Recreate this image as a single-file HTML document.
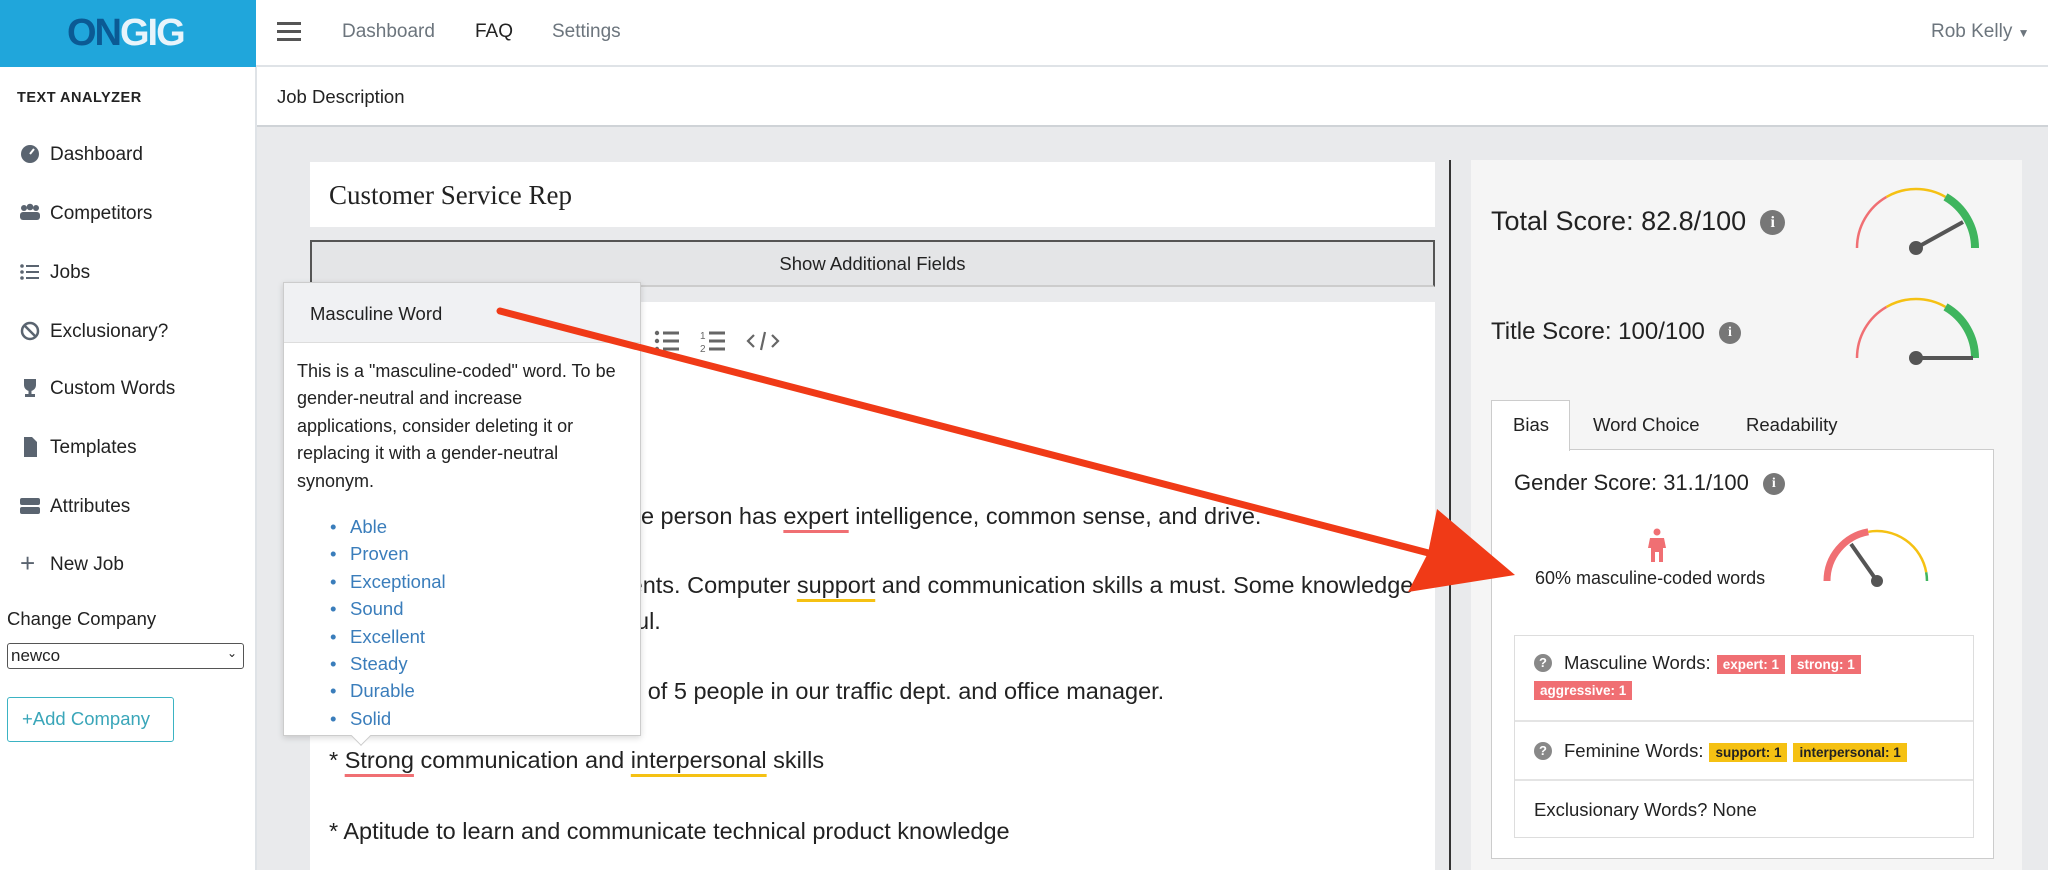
<!DOCTYPE html>
<html><head><meta charset="utf-8"><style>
*{margin:0;padding:0;box-sizing:border-box}
body{width:2048px;height:870px;overflow:hidden;font-family:"Liberation Sans",sans-serif;background:#fff;position:relative;color:#222}
.a{position:absolute;white-space:nowrap}
.side{font-size:19px;color:#222}
.ico{position:absolute;left:19px;width:22px;height:22px;color:#5a6470}
.ed{font-size:23.5px;color:#222}
.ul{text-decoration:underline;text-decoration-thickness:3px;text-underline-offset:6px}
.pl li{list-style:none;position:absolute;left:68px;font-size:18.5px;color:#3a7dbb}
.pl li:before{content:"•";position:absolute;left:-20px;color:#3a7dbb}
.badge{display:inline-block;font-size:13.5px;font-weight:bold;color:#fff;background:#f06f73;padding:2px 6px;margin-left:6px}
.by{background:#f5c113;color:#222}
.q{display:inline-block;width:18px;height:18px;border-radius:50%;background:#888;color:#fff;font-size:13px;text-align:center;line-height:18px;font-weight:bold;margin-right:12px;vertical-align:2px}
.info{display:inline-block;width:25px;height:25px;border-radius:50%;background:#777;color:#fff;font-size:16px;text-align:center;line-height:25px;font-weight:bold;font-family:"Liberation Serif",serif;margin-left:14px;vertical-align:3px}
</style></head><body>
<!-- header -->
<div class="a" style="left:0;top:0;width:256px;height:67px;background:#20a6db"></div>
<div class="a" style="left:67px;top:12px;font-size:38px;font-weight:bold;letter-spacing:-2px;color:#0b5a94">ON<span style="color:#e8f4fb">GIG</span></div>
<div class="a" style="left:256px;top:0;width:1792px;height:67px;background:#fff;border-bottom:2px solid #dfe3e7"></div>
<div class="a" style="left:277px;top:22px;width:24px;height:3px;background:#555;box-shadow:0 8px 0 #555,0 16px 0 #555"></div>
<div class="a" style="left:342px;top:21px;font-size:19px;color:#6c757d">Dashboard</div>
<div class="a" style="left:475px;top:21px;font-size:19px;color:#222">FAQ</div>
<div class="a" style="left:552px;top:21px;font-size:19px;color:#6c757d">Settings</div>
<div class="a" style="left:1931px;top:21px;font-size:19px;color:#6c757d">Rob Kelly <span style="font-size:12px">▼</span></div>
<!-- sidebar -->
<div class="a" style="left:255px;top:67px;width:2px;height:803px;background:#dfe3e7"></div>
<div class="a" style="left:17px;top:90px;font-size:14.5px;font-weight:bold;letter-spacing:.5px">TEXT ANALYZER</div>
<div class="a side" style="left:50px;top:144px">Dashboard</div>
<svg class="ico" style="top:143px" viewBox="0 0 22 22"><circle cx="11" cy="11" r="9" fill="#5a6470"/><path d="M11 11 L15 6" stroke="#fff" stroke-width="2"/></svg>
<div class="a side" style="left:50px;top:203px">Competitors</div>
<svg class="ico" style="top:202px" viewBox="0 0 22 22" fill="#5a6470"><circle cx="5" cy="6" r="3"/><circle cx="11" cy="5" r="3.3"/><circle cx="17" cy="6" r="3"/><rect x="1" y="10" width="20" height="8" rx="3"/></svg>
<div class="a side" style="left:50px;top:262px">Jobs</div>
<svg class="ico" style="top:261px" viewBox="0 0 22 22" fill="#5a6470"><circle cx="3" cy="5" r="1.8"/><circle cx="3" cy="11" r="1.8"/><circle cx="3" cy="17" r="1.8"/><rect x="7" y="4" width="13" height="2"/><rect x="7" y="10" width="13" height="2"/><rect x="7" y="16" width="13" height="2"/></svg>
<div class="a side" style="left:50px;top:321px">Exclusionary?</div>
<svg class="ico" style="top:320px" viewBox="0 0 22 22"><circle cx="11" cy="11" r="8" fill="none" stroke="#5a6470" stroke-width="2.5"/><path d="M5.5 5.5L16.5 16.5" stroke="#5a6470" stroke-width="2.5"/></svg>
<div class="a side" style="left:50px;top:378px">Custom Words</div>
<svg class="ico" style="top:377px" viewBox="0 0 22 22" fill="#5a6470"><path d="M5 2h12v6a6 6 0 0 1-12 0z"/><rect x="9.5" y="13" width="3" height="4"/><rect x="6" y="17" width="10" height="3"/></svg>
<div class="a side" style="left:50px;top:437px">Templates</div>
<svg class="ico" style="top:436px" viewBox="0 0 22 22" fill="#5a6470"><path d="M5 1h8l5 5v15H5z"/></svg>
<div class="a side" style="left:50px;top:496px">Attributes</div>
<svg class="ico" style="top:495px" viewBox="0 0 22 22" fill="#5a6470"><rect x="1" y="3" width="20" height="7" rx="2"/><rect x="1" y="12" width="20" height="7" rx="2"/></svg>
<div class="a side" style="left:50px;top:554px">New Job</div>
<div class="a" style="left:20px;top:548px;font-size:26px;color:#5a6470">+</div>
<div class="a" style="left:7px;top:608px;font-size:18.5px;color:#222">Change Company</div>
<div class="a" style="left:7px;top:643px;width:237px;height:26px;border:1px solid #555;border-radius:3px;font-size:17px;padding:2px 3px">newco<span style="position:absolute;right:6px;top:2px;font-size:12px">⌄</span></div>
<div class="a" style="left:7px;top:697px;width:167px;height:45px;border:1.5px solid #3bb3c3;border-radius:3px;color:#3aa6b9;font-size:18.5px;padding:10px 0 0 14px">+Add Company</div>
<!-- subheader -->
<div class="a" style="left:257px;top:67px;width:1791px;height:60px;background:#fff;border-bottom:2px solid #cfd3d7"></div>
<div class="a" style="left:277px;top:86px;font-size:18.5px">Job Description</div>
<div class="a" style="left:257px;top:127px;width:1791px;height:743px;background:#e9eaec"></div>
<!-- title -->
<div class="a" style="left:310px;top:162px;width:1125px;height:65px;background:#fff"></div>
<div class="a" style="left:329px;top:180px;font-size:27px;font-family:'Liberation Serif',serif">Customer Service Rep</div>
<div class="a" style="left:310px;top:240px;width:1125px;height:47px;background:#e4e5e7;border:2px solid #555;border-bottom-color:#ccc;text-align:center;font-size:18.5px;line-height:43px">Show Additional Fields</div>
<div class="a" style="left:310px;top:302px;width:1125px;height:568px;background:#fff;overflow:hidden">
<div class="a ed" style="left:-37px;top:201px">The ideal candidate for this role: The person has <span class="ul" style="text-decoration-color:#f06f73">expert</span> intelligence, common sense, and drive.</div>
</div>
<!-- toolbar -->
<svg class="a" style="left:654px;top:328px" width="130" height="26" viewBox="0 0 130 26" fill="#666"><circle cx="3" cy="5" r="2.2"/><circle cx="3" cy="13" r="2.2"/><circle cx="3" cy="21" r="2.2"/><rect x="9" y="3.5" width="16" height="3"/><rect x="9" y="11.5" width="16" height="3"/><rect x="9" y="19.5" width="16" height="3"/><text x="46" y="11" font-size="10" font-family="Liberation Sans">1</text><text x="46" y="24" font-size="10" font-family="Liberation Sans">2</text><rect x="55" y="3.5" width="16" height="3"/><rect x="55" y="11.5" width="16" height="3"/><rect x="55" y="19.5" width="16" height="3"/><path d="M100 7l-6 6 6 6M118 7l6 6-6 6M111 4l-4 18" fill="none" stroke="#666" stroke-width="2.2"/></svg>
<!-- editor text -->
<div class="a ed" style="left:341px;top:572px">Handles customer requirements. Computer <span class="ul" style="text-decoration-color:#f5c113">support</span> and communication skills a must. Some knowledge</div>
<div class="a ed" style="left:329px;top:608px">of shipping and logistics helpful.</div>
<div class="a ed" style="left:329px;top:678px">Reports to manager and team of 5 people in our traffic dept. and office manager.</div>
<div class="a ed" style="left:329px;top:747px">* <span class="ul" style="text-decoration-color:#f06f73">Strong</span> communication and <span class="ul" style="text-decoration-color:#f5c113">interpersonal</span> skills</div>
<div class="a ed" style="left:329px;top:818px">* Aptitude to learn and communicate technical product knowledge</div>
<!-- popover -->
<div class="a" style="left:283px;top:282px;width:358px;height:454px;background:#fff;border:1px solid #ccc;box-shadow:0 2px 6px rgba(0,0,0,.15)"></div>
<div class="a" style="left:284px;top:283px;width:356px;height:60px;background:#f0f1f3;border-bottom:1px solid #ddd"></div>
<div class="a" style="left:310px;top:303px;font-size:18.5px">Masculine Word</div>
<div class="a" style="left:297px;top:358px;font-size:18px;line-height:27.4px;white-space:normal;width:322px">This is a "masculine-coded" word. To be gender-neutral and increase applications, consider deleting it or replacing it with a gender-neutral synonym.</div>
<ul class="pl">
<li style="top:516px;left:350px">Able</li><li style="top:543px;left:350px">Proven</li><li style="top:571px;left:350px">Exceptional</li><li style="top:598px;left:350px">Sound</li><li style="top:626px;left:350px">Excellent</li><li style="top:653px;left:350px">Steady</li><li style="top:680px;left:350px">Durable</li><li style="top:708px;left:350px">Solid</li></ul>
<div class="a" style="left:354px;top:729px;width:14px;height:14px;background:#fff;border-right:1px solid #ccc;border-bottom:1px solid #ccc;transform:rotate(45deg)"></div>
<!-- divider -->
<div class="a" style="left:1449px;top:160px;width:2px;height:710px;background:#333"></div>
<!-- right panel -->
<div class="a" style="left:1471px;top:160px;width:551px;height:710px;background:#f5f5f5"></div>
<div class="a" style="left:1491px;top:206px;font-size:27px;color:#222">Total Score: 82.8/100<span class="info">i</span></div>
<svg class="a" style="left:1846px;top:178px" width="140" height="90"><path d="M11 70A59 59 0 0 1 40.5 18.9" fill="none" stroke="#f06f73" stroke-width="2.5"/><path d="M40.5 18.9A59 59 0 0 1 99.5 18.9" fill="none" stroke="#f5c113" stroke-width="2.5"/><path d="M99.5 18.9A59 59 0 0 1 129 70" fill="none" stroke="#3fb55e" stroke-width="8"/><path d="M70 70L117 44" stroke="#555" stroke-width="4"/><circle cx="70" cy="70" r="7" fill="#555"/></svg>
<div class="a" style="left:1491px;top:318px;font-size:24px;color:#222">Title Score: 100/100<span class="info" style="width:22px;height:22px;line-height:22px;font-size:14px">i</span></div>
<svg class="a" style="left:1846px;top:288px" width="140" height="90"><path d="M11 70A59 59 0 0 1 40.5 18.9" fill="none" stroke="#f06f73" stroke-width="2.5"/><path d="M40.5 18.9A59 59 0 0 1 99.5 18.9" fill="none" stroke="#f5c113" stroke-width="2.5"/><path d="M99.5 18.9A59 59 0 0 1 129 70" fill="none" stroke="#3fb55e" stroke-width="8"/><path d="M70 70L127 70" stroke="#555" stroke-width="4"/><circle cx="70" cy="70" r="7" fill="#555"/></svg>
<!-- tabs -->
<div class="a" style="left:1491px;top:449px;width:503px;height:410px;background:#fff;border:1px solid #ccc"></div>
<div class="a" style="left:1491px;top:400px;width:79px;height:51px;background:#fff;border:1px solid #ccc;border-bottom:none"></div>
<div class="a" style="left:1513px;top:414px;font-size:18.5px">Bias</div>
<div class="a" style="left:1593px;top:414px;font-size:18.5px">Word Choice</div>
<div class="a" style="left:1746px;top:414px;font-size:18.5px">Readability</div>
<div class="a" style="left:1514px;top:470px;font-size:22px">Gender Score: 31.1/100<span class="info" style="width:22px;height:22px;line-height:22px;font-size:14px">i</span></div>
<svg class="a" style="left:1646px;top:528px" width="22" height="36" fill="#f06f73"><circle cx="11" cy="4" r="3.5"/><path d="M4 10h14l2 10h-3v14h-4v-10h-4v10h-4v-14h-3z"/></svg>
<div class="a" style="left:1535px;top:568px;font-size:18px">60% masculine-coded words</div>
<svg class="a" style="left:1817px;top:521px" width="120" height="80"><path d="M10 60A50 50 0 0 1 51.3 10.8" fill="none" stroke="#f06f73" stroke-width="7"/><path d="M51.3 10.8A50 50 0 0 1 109.2 51.3" fill="none" stroke="#f5c113" stroke-width="2.5"/><path d="M109.2 51.3A50 50 0 0 1 110 60" fill="none" stroke="#3fb55e" stroke-width="2.5"/><path d="M60 60L34 23" stroke="#555" stroke-width="4"/><circle cx="60" cy="60" r="6" fill="#555"/></svg>
<div class="a" style="left:1514px;top:635px;width:460px;height:203px;border:1px solid #ddd"></div>
<div class="a" style="left:1515px;top:720px;width:458px;height:2px;background:#e4e4e4"></div>
<div class="a" style="left:1515px;top:779px;width:458px;height:2px;background:#e4e4e4"></div>
<div class="a" style="left:1534px;top:652px;font-size:18.5px"><span class="q">?</span>Masculine Words:<span class="badge">expert: 1</span><span class="badge">strong: 1</span></div>
<div class="a" style="left:1528px;top:681px"><span class="badge">aggressive: 1</span></div>
<div class="a" style="left:1534px;top:740px;font-size:18.5px"><span class="q">?</span>Feminine Words:<span class="badge by">support: 1</span><span class="badge by">interpersonal: 1</span></div>
<div class="a" style="left:1534px;top:799px;font-size:18.5px">Exclusionary Words? None</div>
<!-- arrow -->
<svg class="a" style="left:0;top:0" width="2048" height="870"><path d="M500 311L1440 556" stroke="#f03a17" stroke-width="7" stroke-linecap="round"/><path d="M1515 575L1408 592L1428 553L1437 509Z" fill="#f03a17"/></svg>
</body></html>
